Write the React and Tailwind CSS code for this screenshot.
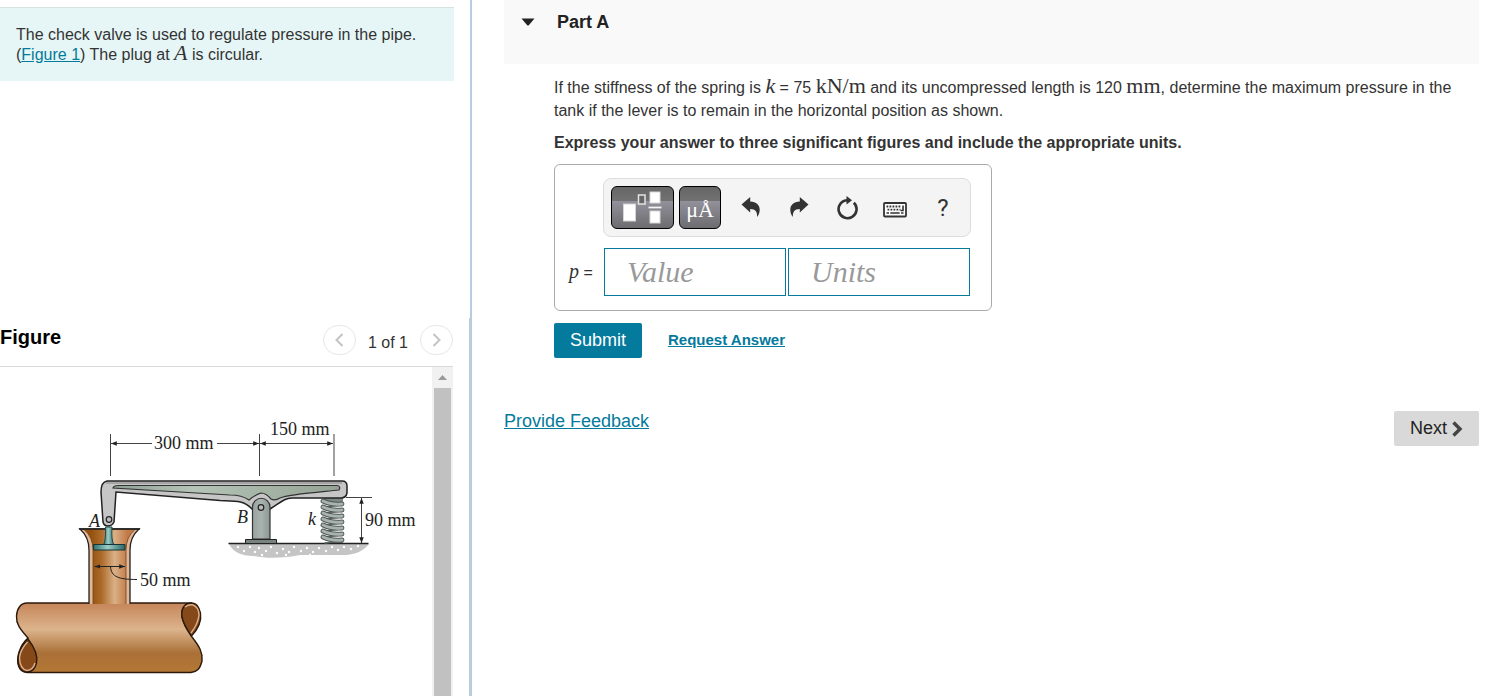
import React, { useState } from 'react';

const Caret = () => (
  <svg className="h-2 w-[14px]" viewBox="0 0 14 8" fill="#222">
    <path d="M0.5 0.5h13L7.8 7.2a1.1 1.1 0 0 1-1.6 0z" />
  </svg>
);

const UndoIcon = () => (
  <svg className="h-6 w-6" viewBox="0 0 24 24" fill="#333">
    <path d="M2.500 8.500 11.200 1v4.500c6.200.3 9.500 3.600 9.500 8.200 0 2.900-1 5.300-2.600 7.300.3-5.200-1.500-8-6.900-8v3.600z" />
  </svg>
);

const RedoIcon = () => (
  <svg className="h-6 w-6" viewBox="0 0 24 24" fill="#333">
    <path d="M21.500 8.500 12.800 1v4.500c-6.200.3-9.500 3.600-9.500 8.200 0 2.900 1 5.300 2.600 7.300-.3-5.200 1.500-8 6.900-8v3.600z" />
  </svg>
);

const ResetIcon = () => (
  <svg className="h-6 w-6" viewBox="0 0 24 24">
    <path d="M12.500 4.200A9 9 0 1 0 18.800 6.700" fill="none" stroke="#333" strokeWidth="2.600" />
    <path d="M11.500 0v8.400l5.500-4.200z" fill="#333" />
  </svg>
);

const KeyboardIcon = () => (
  <svg className="h-6 w-6" viewBox="0 0 24 24">
    <rect x="1" y="7" width="22" height="13.500" rx="1" fill="#fff" stroke="#333" strokeWidth="1.800" />
    <path d="M3.500 10.500h15" stroke="#333" strokeWidth="1.800" strokeDasharray="1.800 1.200" />
    <path d="M4.500 13.700h13" stroke="#333" strokeWidth="1.800" strokeDasharray="1.800 1.200" />
    <path d="M3.500 17h2.500M7.300 17h9.400M18 17h2.500" stroke="#333" strokeWidth="1.600" />
    <path d="M20 9.500v5h-2.500" fill="none" stroke="#333" strokeWidth="1.600" />
  </svg>
);

const TemplateIcon = () => (
  <svg className="h-[34px] w-10" viewBox="0 0 40 34">
    <rect x="0.500" y="13" width="12" height="17" fill="#fff" stroke="#d6d6d6" />
    <rect x="15.500" y="4" width="6.500" height="9" fill="#666" stroke="#e4e4e4" strokeWidth="1.500" />
    <rect x="27" y="1" width="10" height="11" fill="#fff" stroke="#d6d6d6" />
    <path d="M25.500 16.500h13" stroke="#f4f4f4" strokeWidth="1.800" />
    <rect x="27" y="20" width="10" height="12" fill="#fff" stroke="#d6d6d6" />
  </svg>
);

const coils = [503, 509, 515, 521, 527, 533, 539];

const speckles = [
  [238, 547], [244, 551], [250, 547], [255, 552], [259, 548], [266, 551], [271, 547], [277, 553],
  [283, 549], [289, 552], [294, 547], [301, 551], [307, 548], [313, 552], [319, 548], [326, 551],
  [332, 547], [338, 550], [344, 547], [351, 549], [358, 546], [262, 555], [286, 555], [310, 555],
];

const ValveFigure = () => (
  <svg
    className="h-[329px] w-[432px] shrink-0"
    viewBox="0 367 432 329"
    role="img"
    aria-label="Check valve with lever and spring"
    fontFamily="'Liberation Serif', serif"
    fontSize="18"
  >
    <defs>
      <linearGradient id="pipe" x1="0" y1="0" x2="0" y2="1">
        <stop offset="0" stopColor="#c6855a" />
        <stop offset="0.380" stopColor="#dcb48c" />
        <stop offset="0.720" stopColor="#aa7038" />
        <stop offset="1" stopColor="#b47834" />
      </linearGradient>
      <linearGradient id="neck" x1="0" y1="0" x2="1" y2="0">
        <stop offset="0.150" stopColor="#96530f" />
        <stop offset="0.350" stopColor="#ad6c2c" />
        <stop offset="0.600" stopColor="#d9b086" />
        <stop offset="0.850" stopColor="#c27a48" />
      </linearGradient>
      <linearGradient id="plug" x1="0" y1="0" x2="1" y2="0">
        <stop offset="0" stopColor="#2f7170" />
        <stop offset="0.450" stopColor="#9ccdc7" />
        <stop offset="1" stopColor="#2c6665" />
      </linearGradient>
      <linearGradient id="steel" x1="0" y1="0" x2="1" y2="0">
        <stop offset="0" stopColor="#98a2a0" />
        <stop offset="0.500" stopColor="#a9b3b0" />
        <stop offset="1" stopColor="#8c9694" />
      </linearGradient>
      <linearGradient id="web" x1="0" y1="0" x2="1" y2="0">
        <stop offset="0" stopColor="#8ea196" />
        <stop offset="0.350" stopColor="#b4c4b6" />
        <stop offset="1" stopColor="#94a394" />
      </linearGradient>
      <marker id="arrow" viewBox="0 0 7 6" refX="7" refY="3" markerWidth="6" markerHeight="5" markerUnits="userSpaceOnUse" orient="auto-start-reverse">
        <path d="M0 0.300 7 3 0 5.700z" fill="#222" />
      </marker>
    </defs>

    {/* dimension lines */}
    <g stroke="#444" strokeWidth="1" fill="none">
      <path d="M110.500 434v42M259.500 434v42M334 434v42M346 497.500h26" />
      <path d="M152 443.500H111" markerEnd="url(#arrow)" />
      <path d="M217 443.500H259" markerEnd="url(#arrow)" />
      <path d="M260 443.500H333" markerStart="url(#arrow)" markerEnd="url(#arrow)" />
      <path d="M361.500 498V543" markerStart="url(#arrow)" markerEnd="url(#arrow)" />
    </g>
    <g fill="#222">
      <text x="154" y="449">300 mm</text>
      <text x="270" y="435">150 mm</text>
      <text x="365" y="526">90 mm</text>
      <text x="140" y="586">50 mm</text>
      <text x="89" y="527" fontStyle="italic">A</text>
      <text x="237" y="523" fontStyle="italic">B</text>
      <text x="308" y="525" fontStyle="italic">k</text>
    </g>

    {/* ground */}
    <path d="M229 544H369C363 551 357 554 346 555L300 555C285 558 268 559 254 556C241 556 233 552 229 544Z" fill="#c5c5c5" />
    {speckles.map(([x, y]) => (
      <circle key={`${x}-${y}`} cx={x} cy={y} r="1.200" fill="#fff" />
    ))}
    <path d="M228.500 543.500h140" stroke="#222" strokeWidth="1.300" />

    {/* spring */}
    <rect x="324" y="497" width="19" height="5" fill="#7d8886" />
    <rect x="330" y="538" width="13" height="5" fill="#66716e" />
    {coils.map((y) => (
      <g key={y} fill="none" strokeLinecap="round">
        <path d={`M342 ${y + 2}L325 ${y + 4}`} stroke="#5d6664" strokeWidth="1.500" />
        <path d={`M323 ${y - 2}Q331 ${y + 2} 342 ${y + 1}`} stroke="#4c5553" strokeWidth="4.800" />
        <path d={`M323 ${y - 2}Q331 ${y + 2} 342 ${y + 1}`} stroke="#a8b2af" strokeWidth="3" />
      </g>
    ))}

    {/* lever */}
    <path
      d="M107 481H342Q347 481 347 486V493Q346 498 341 498H292C284 498 280 503 270 509H252C244 500 235 501 220 500.500L116 492L114 522Q112 526 108 526Q104 526 103 522L101 492Q101 482 107 481Z"
      fill="#c6c6c6" stroke="#222" strokeWidth="1.500"
    />
    <path d="M106 483H342" stroke="#9a9a9a" strokeWidth="1.500" />
    <path
      d="M113 488Q114 485.500 118 485.500H337Q341 486 339 490C320 492 289 494 280 498Q275 501 271 499Q266 493 261 493Q255 495 249 500Q242 495 230 495L113 488Z"
      fill="url(#web)" stroke="#333" strokeWidth="1.200"
    />
    <circle cx="109" cy="519.500" r="2.800" fill="#bbb" stroke="#222" strokeWidth="1.200" />

    {/* support at B */}
    <path d="M252.500 539V507A8.700 8.700 0 0 1 270 507V539Z" fill="url(#steel)" stroke="#333" strokeWidth="1.200" />
    <path d="M245.500 539.500H276.500V543.500H245.500Z" fill="#78827f" stroke="#222" />
    <circle cx="261" cy="507.500" r="2.800" fill="#b5bdbb" stroke="#222" strokeWidth="1.200" />

    {/* horizontal pipe */}
    <path
      d="M192 603C184 603 181 609 182 617C184 626 188 631 192 637C199 646 203 652 202 661C200 669 197 672 191 672.500H27C18 672 16 662 19 652Q22 643 28 638C20 629 16 624 16.500 616C17 608 21 603 27 603Z"
      fill="url(#pipe)" stroke="#2b1a0c" strokeWidth="1.400"
    />
    <path d="M28 639C35 648 38 656 36.500 663C35 670 31 672 27 672C18 672 17 662 19 654Q22 645 28 639Z" fill="#854818" stroke="#2b1a0c" strokeWidth="1.300" />
    <path d="M27.500 642Q20 650 19.500 658Q20 669 27 670.500Q33 670 35 663" fill="none" stroke="#ddb08f" strokeWidth="1.400" />
    <path d="M192 603C184 603 181 609 182 617C184 626 188 631 191.500 636C198 629 202 622 200.500 613Q198 603 192 603Z" fill="#854818" stroke="#2b1a0c" strokeWidth="1.300" />
    <path d="M185 607Q188 604.500 192 604.700Q199 607 199 615Q198 624 191 633" fill="none" stroke="#ddb08f" strokeWidth="1.400" />

    {/* riser with flared mouth, open into the pipe */}
    <path d="M89 604V550Q89 537 80 529H139Q130 537 130 550V604" fill="#e3b695" stroke="#222" strokeWidth="1.300" />
    <path d="M93 604V550Q93 537 84 529.500H135Q126 537 126 550V604" fill="url(#neck)" stroke="#6f431c" strokeWidth="0.800" />
    <path d="M79 529h61" stroke="#222" strokeWidth="1.300" />

    {/* plug */}
    <path d="M105.500 527H112Q111 540 114 545H103.500Q106 540 105.500 527Z" fill="url(#plug)" stroke="#244c4b" />
    <path d="M93.500 544.500H125V550H93.500Z" fill="url(#plug)" stroke="#173534" />

    {/* diameter callout */}
    <path d="M94.500 566.500H125" stroke="#222" markerStart="url(#arrow)" markerEnd="url(#arrow)" />
    <path d="M110.500 566.500C111 577 119 579.500 137 579.500" fill="none" stroke="#222" />
  </svg>
);

const PagerButton = ({ label, path }) => (
  <button
    type="button"
    aria-label={label}
    className="flex h-[30px] w-[33px] items-center justify-center rounded-full border border-[#e6e6e6] bg-white"
  >
    <svg className="h-[14px] w-[10px]" viewBox="0 0 10 14" fill="none" stroke="#c4c4c4" strokeWidth="2">
      <path d={path} />
    </svg>
  </button>
);

const ToolButton = ({ label, children }) => (
  <button type="button" aria-label={label} className="flex h-8 w-12 shrink-0 items-center justify-center text-[#333]">
    {children}
  </button>
);

const MathText = ({ italic, children }) => (
  <span className={`font-['Liberation_Serif',serif] text-[22px] leading-4 ${italic ? 'italic' : ''}`}>{children}</span>
);

const darkTool =
  'flex h-[43px] shrink-0 items-center justify-center rounded-[6px] border border-black bg-[linear-gradient(#666_0%,#727272_35%,#92909a_35%,#6c6c70_100%)]';

const App = () => {
  const [value, setValue] = useState('');
  const [units, setUnits] = useState('');
  const [open, setOpen] = useState(true);

  return (
    <div className="grid h-screen grid-cols-[472fr_1014fr] overflow-hidden bg-white font-['Liberation_Sans',Arial,sans-serif] text-[16px] text-[#333]">
      <aside className="grid min-w-0 grid-rows-[318fr_378fr]">
        <section className="border-r-2 border-[#b9cbdf] pt-[7px] pr-4">
          <p className="border-t border-[#d5e4e3] bg-[#e6f6f6] px-4 pt-[17px] pb-4 leading-5">
            The check valve is used to regulate pressure in the pipe.
            <br />
            (<a href="#figure" className="text-[#047a9c] underline">Figure 1</a>) The plug at{' '}
            <MathText italic>A</MathText> is circular.
          </p>
        </section>

        <section id="figure" className="flex min-h-0 flex-col border-r-[3px] border-[#b9cbdf] pr-4">
          <div className="flex h-[49px] items-center justify-between border-b border-[#d9d9d9]">
            <h2 className="pb-[10px] text-[20px] font-bold text-black">Figure</h2>
            <div className="flex items-center gap-3 pb-1">
              <PagerButton label="Previous figure" path="M8.500 1 2.500 7l6 6" />
              <span className="pt-[6px]">1 of 1</span>
              <PagerButton label="Next figure" path="M1.500 1l6 6-6 6" />
            </div>
          </div>
          <div className="flex min-h-0 flex-1 justify-between">
            <ValveFigure />
            <div className="flex w-[21px] shrink-0 flex-col items-center bg-[#f1f1f1]">
              <svg className="my-2 h-[5px] w-[9px] shrink-0" viewBox="0 0 9 5" fill="#9a9a9a">
                <path d="M0 5 4.500 0 9 5z" />
              </svg>
              <div className="w-[17px] flex-1 bg-[#c1c1c1]"></div>
            </div>
          </div>
        </section>
      </aside>

      <main className="min-w-0 pr-[7px] pl-8">
        <header className="flex h-16 items-start bg-[#f9f9f9] px-[17px] pt-[10px]">
          <button
            type="button"
            onClick={() => setOpen(!open)}
            aria-expanded={open}
            className="flex items-center gap-[22px] text-[18px] leading-6 font-bold text-[#222]"
          >
            <Caret />
            Part A
          </button>
        </header>

        {open && (
          <div className="pt-3 pl-[50px]">
            <p className="pr-2 leading-[23px]">
              If the stiffness of the spring is <MathText italic>k</MathText> = 75 <MathText>kN/m</MathText> and its
              uncompressed length is 120 <MathText>mm</MathText>, determine the maximum pressure in the tank if the
              lever is to remain in the horizontal position as shown.
            </p>
            <p className="mt-[9px] leading-[23px] font-bold">
              Express your answer to three significant figures and include the appropriate units.
            </p>

            <form onSubmit={(e) => e.preventDefault()}>
              <div className="mt-[10px] w-[438px] rounded-[6px] border border-[#aaa] px-3 pt-[13px] pb-[14px]">
                <div className="ml-9 flex h-[59px] w-[368px] items-center rounded-lg border border-[#ddd] bg-[#f4f4f4] pl-[7px]">
                  <button type="button" aria-label="Templates" className={`w-[63px] ${darkTool}`}>
                    <TemplateIcon />
                  </button>
                  <button
                    type="button"
                    className={`mr-[6px] ml-[5px] w-[42px] pt-1 font-['Liberation_Serif',serif] text-[22px] text-white ${darkTool}`}
                  >
                    μÅ
                  </button>
                  <ToolButton label="Undo"><UndoIcon /></ToolButton>
                  <ToolButton label="Redo"><RedoIcon /></ToolButton>
                  <ToolButton label="Reset"><ResetIcon /></ToolButton>
                  <ToolButton label="Keyboard shortcuts"><KeyboardIcon /></ToolButton>
                  <ToolButton label="Help"><span className="font-[Roboto] text-[24px]">?</span></ToolButton>
                </div>
                <div className="mt-[11px] flex items-center gap-[2px]">
                  <label htmlFor="value" className="w-[35px] pt-[2px] pl-[2px] whitespace-nowrap">
                    <span className="font-['Liberation_Serif',serif] text-[20px] leading-4 italic">p</span> =
                  </label>
                  <input
                    id="value"
                    value={value}
                    onChange={(e) => setValue(e.target.value)}
                    placeholder="Value"
                    className="h-12 w-[182px] border border-[#047a9c] px-[22px] font-['Liberation_Serif',serif] text-[30px] italic outline-none placeholder:text-[#999]"
                  />
                  <input
                    aria-label="Units"
                    value={units}
                    onChange={(e) => setUnits(e.target.value)}
                    placeholder="Units"
                    className="h-12 w-[182px] border border-[#047a9c] px-[22px] font-['Liberation_Serif',serif] text-[30px] italic outline-none placeholder:text-[#999]"
                  />
                </div>
              </div>

              <div className="mt-3 flex items-center gap-[26px]">
                <button type="submit" className="h-[35px] rounded-[2px] bg-[#047a9c] px-4 text-[18px] text-white">
                  Submit
                </button>
                <a href="#answer" className="text-[15px] font-bold text-[#047a9c] underline">Request Answer</a>
              </div>
            </form>
          </div>
        )}

        <footer className="mt-[53px] flex items-start justify-between">
          <a href="#feedback" className="text-[18px] leading-5 text-[#047a9c] underline">Provide Feedback</a>
          <button type="button" className="flex h-[35px] items-center gap-1 rounded-[2px] bg-[#d9d9d9] px-4 text-[18px] text-[#222]">
            Next
            <svg className="h-4 w-3" viewBox="0 0 12 16" fill="none" stroke="#444" strokeWidth="3.400">
              <path d="M2.500 1.500 9 8l-6.500 6.500" />
            </svg>
          </button>
        </footer>
      </main>
    </div>
  );
};

export default App;
